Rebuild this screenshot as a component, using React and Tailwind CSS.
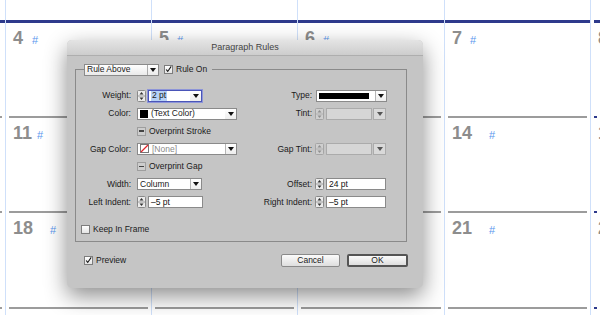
import React from 'react';

const font = { fontFamily: '"Liberation Sans", Arial, sans-serif' };

// calendar columns: number + offset of the blue "#" marker
const columns = [
  { w: 'w-[146px]', cells: [{ n: '4', gap: 'ml-[9px]' }, { n: '11', gap: 'ml-[5px]' }, { n: '18', gap: 'ml-[17px]' }] },
  { w: 'w-[146px]', cells: [{ n: '5', gap: 'ml-[8px]' }, { n: '12', gap: 'ml-[5px]' }, { n: '19', gap: 'ml-[17px]' }] },
  { w: 'w-[147px]', cells: [{ n: '6', gap: 'ml-[8px]' }, { n: '13', gap: 'ml-[5px]' }, { n: '20', gap: 'ml-[17px]' }] },
  { w: 'w-[146px]', cells: [{ n: '7', gap: 'ml-[8px]' }, { n: '14', gap: 'ml-[17px]' }, { n: '21', gap: 'ml-[17px]' }] },
];

const Arrow = () => (
  <svg width="6" height="4" viewBox="0 0 6 4"><path d="M0 0h6L3 4z" fill="#111" /></svg>
);

const Stepper = ({ disabled }) => (
  <svg width="9" height="12" viewBox="0 0 9 12" className="shrink-0">
    <rect x="0.5" y="0.5" width="8" height="11" rx="1" fill={disabled ? '#cfcfcf' : '#ececec'} stroke={disabled ? '#a5a5a5' : '#8a8a8a'} />
    <path d="M1 6h7" stroke={disabled ? '#b0b0b0' : '#9a9a9a'} />
    <path d="M4.5 2L6.5 4.5h-4z" fill={disabled ? '#8f8f8f' : '#333'} />
    <path d="M4.5 10L6.5 7.5h-4z" fill={disabled ? '#8f8f8f' : '#333'} />
  </svg>
);

const Combo = ({ w, children, divider, disabled, focus }) => (
  <div
    className={`${w} h-[12px] flex items-center bg-white ${
      focus ? 'border border-[#4a55b8] shadow-[0_0_0_1px_#8d95d8]' : disabled ? 'border border-[#a9a9a9]' : 'border border-[#8a8a8a]'
    }`}
  >
    <div className="flex-1 flex items-center overflow-hidden pl-[2px] h-full">{children}</div>
    <div className={`w-[11px] h-full flex items-center justify-center ${divider ? 'border-l border-[#b5b5b5]' : ''} bg-gradient-to-b from-white to-[#ededed]`}>
      <Arrow />
    </div>
  </div>
);

const Field = ({ w, children }) => (
  <div className={`${w} h-[12px] bg-white border border-[#8a8a8a] flex items-center pl-[2px] text-[#111]`}>{children}</div>
);

const DisabledTint = () => (
  <div className="flex items-center">
    <Stepper disabled />
    <div className="ml-[2px] w-[46px] h-[12px] bg-[#d6d6d6] border border-[#ababab]" />
    <div className="ml-[1px] w-[13px] h-[12px] bg-[#d9d9d9] border border-[#ababab] flex items-center justify-center">
      <svg width="6" height="4" viewBox="0 0 6 4"><path d="M0 0h6L3 4z" fill="#555" /></svg>
    </div>
  </div>
);

const Check = ({ state }) => (
  <span
    className={`w-[9px] h-[9px] shrink-0 flex items-center justify-center border ${
      state === 'mixed' ? 'bg-[#cdcdcd] border-[#9e9e9e]' : 'bg-gradient-to-b from-white to-[#e4e4e4] border-[#7d7d7d]'
    }`}
  >
    {state === 'on' && (
      <svg width="9" height="9" viewBox="0 0 9 9"><path d="M1.5 4.5l2 2.5L8 0.5" fill="none" stroke="#111" strokeWidth="1.4" /></svg>
    )}
    {state === 'mixed' && <span className="w-[5px] h-[1.5px] bg-[#444]" />}
  </span>
);

const Row = ({ left, label, right, rlabel }) => (
  <div className="h-[17.7px] flex items-center">
    <div className="w-[181px] flex items-center">
      <span className="w-[55px] text-right">{label}</span>
      <div className="ml-[6px] flex items-center">{left}</div>
    </div>
    {rlabel && (
      <>
        <span className="w-[55px] text-right">{rlabel}</span>
        <div className="ml-[3px] flex items-center">{right}</div>
      </>
    )}
  </div>
);

const Dialog = () => (
  <div className="absolute left-[67px] top-[40px] w-[356px] h-[248px] rounded-[5px] bg-[#c5c5c5] shadow-[0_8px_22px_rgba(0,0,0,0.45)] text-[8.5px] text-[#1a1a1a] overflow-hidden" style={font}>
    <div className="h-[16px] flex items-center justify-center bg-gradient-to-b from-[#e4e4e4] to-[#cdcdcd] border-b border-[#aeaeae] text-[#444] text-[9px]">
      Paragraph Rules
    </div>
    <div className="px-[8px] pt-[13px]">
      <div className="relative h-[173px] w-[332px] border border-[#8a8a8a] flex flex-col">
        {/* header sitting on the group border */}
        <div className="absolute left-[8px] top-[-7px] flex items-center bg-[#c5c5c5] pr-[5px] h-[13px]">
          <div className="w-[75px] h-[12px] flex items-center bg-gradient-to-b from-white to-[#eaeaea] border border-[#8a8a8a]">
            <span className="flex-1 pl-[2px]">Rule Above</span>
            <div className="w-[11px] h-full flex items-center justify-center border-l border-[#aaa]"><Arrow /></div>
          </div>
          <span className="ml-[5px]"><Check state="on" /></span>
          <span className="ml-[3px]">Rule On</span>
        </div>

        <div className="pt-[17px]">
          <Row
            label="Weight:"
            left={
              <>
                <Stepper />
                <div className="ml-[2px]">
                  <Combo w="w-[54px]" focus>
                    <span className="bg-[#b7d2f7] px-[1px]">2 pt</span>
                  </Combo>
                </div>
              </>
            }
            rlabel="Type:"
            right={
              <div className="ml-[1px]">
                <Combo w="w-[71px]" divider>
                  <span className="w-[50px] h-[6px] bg-black" />
                </Combo>
              </div>
            }
          />
          <Row
            label="Color:"
            left={
              <Combo w="w-[100px]">
                <span className="w-[8px] h-[8px] bg-black mr-[3px]" />
                (Text Color)
              </Combo>
            }
            rlabel="Tint:"
            right={<DisabledTint />}
          />
          <Row
            label=""
            left={
              <>
                <Check state="mixed" />
                <span className="ml-[3px]">Overprint Stroke</span>
              </>
            }
          />
          <Row
            label="Gap Color:"
            left={
              <Combo w="w-[100px]" divider>
                <svg width="9" height="9" viewBox="0 0 9 9" className="mr-[3px]">
                  <rect x="0.5" y="0.5" width="8" height="8" fill="#fff" stroke="#777" />
                  <path d="M1 8L8 1" stroke="#e0252b" strokeWidth="1.2" />
                </svg>
                <span className="text-[#8a8a8a]">[None]</span>
              </Combo>
            }
            rlabel="Gap Tint:"
            right={<DisabledTint />}
          />
          <Row
            label=""
            left={
              <>
                <Check state="mixed" />
                <span className="ml-[3px]">Overprint Gap</span>
              </>
            }
          />
          <Row
            label="Width:"
            left={<Combo w="w-[65px]" divider>Column</Combo>}
            rlabel="Offset:"
            right={
              <>
                <Stepper />
                <div className="ml-[2px]"><Field w="w-[60px]">24 pt</Field></div>
              </>
            }
          />
          <Row
            label="Left Indent:"
            left={
              <>
                <Stepper />
                <div className="ml-[2px]"><Field w="w-[55px]">–5 pt</Field></div>
              </>
            }
            rlabel="Right Indent:"
            right={
              <>
                <Stepper />
                <div className="ml-[2px]"><Field w="w-[60px]">–5 pt</Field></div>
              </>
            }
          />
        </div>

        <div className="mt-[13px] h-[12px] flex items-center pl-[5px]">
          <Check state="off" />
          <span className="ml-[3px]">Keep In Frame</span>
        </div>
      </div>

      <div className="mt-[12px] h-[13px] flex items-center">
        <div className="flex items-center pl-[9px]">
          <Check state="on" />
          <span className="ml-[3px]">Preview</span>
        </div>
        <div className="ml-auto mr-[7px] flex items-center gap-[7px]">
          <button className="w-[59px] h-[13px] rounded-[2px] border border-[#8a8a8a] bg-gradient-to-b from-[#fbfbfb] to-[#dedede] flex items-center justify-center">
            Cancel
          </button>
          <button className="w-[61px] h-[13px] rounded-[2px] border-2 border-[#555] bg-gradient-to-b from-[#fbfbfb] to-[#dedede] flex items-center justify-center">
            OK
          </button>
        </div>
      </div>
    </div>
  </div>
);

const DayCell = ({ n, gap, h }) => (
  <div className={`${h} pl-[7px] pt-[4px] flex items-baseline`}>
    <span className="text-[18px] font-bold text-[#8d8d8d] leading-[22px]">{n}</span>
    {gap && <span className={`${gap} text-[11px] text-[#5b97ee]`}>#</span>}
  </div>
);

const Line = ({ navy }) => <div className={`h-[2px] mx-[3px] ${navy ? 'bg-[#2e3a8c]' : 'bg-[#9c9c9c]'}`} />;

export default function App() {
  return (
    <div className="relative w-[600px] h-[315px] bg-white overflow-hidden" style={font}>
      <div className="flex h-full">
        {/* left edge strip */}
        <div className="w-[5px] flex flex-col">
          <div className="h-[20px]" />
          <div className="h-[3px] bg-[#2e3a8c]" />
          <div className="h-[93px]" />
          <div className="h-[2px] w-[2px] bg-[#9c9c9c]" />
          <div className="h-[93px]" />
          <div className="h-[2px] w-[2px] bg-[#9c9c9c]" />
          <div className="h-[94px]" />
          <div className="h-[2px] w-[2px] bg-[#9c9c9c]" />
        </div>

        {columns.map((col, i) => (
          <div key={i} className={`${col.w} border-l border-[#cfe0fa] flex flex-col`}>
            <div className="h-[20px]" />
            <div className="h-[3px] bg-[#2e3a8c]" />
            <DayCell n={col.cells[0].n} gap={col.cells[0].gap} h="h-[93px]" />
            <Line />
            <DayCell n={col.cells[1].n} gap={col.cells[1].gap} h="h-[93px]" />
            <Line />
            <DayCell n={col.cells[2].n} gap={col.cells[2].gap} h="h-[94px]" />
            <Line />
          </div>
        ))}

        {/* right edge strip, next week just peeking in */}
        <div className="w-[10px] border-l border-[#cfe0fa] flex flex-col overflow-hidden">
          <div className="h-[20px]" />
          <div className="h-[3px] ml-[3px] bg-[#2e3a8c]" />
          <DayCell n="8" h="h-[93px]" />
          <Line navy />
          <DayCell n="15" h="h-[93px]" />
          <Line navy />
          <DayCell n="22" h="h-[94px]" />
          <Line navy />
        </div>
      </div>

      <Dialog />
    </div>
  );
}
